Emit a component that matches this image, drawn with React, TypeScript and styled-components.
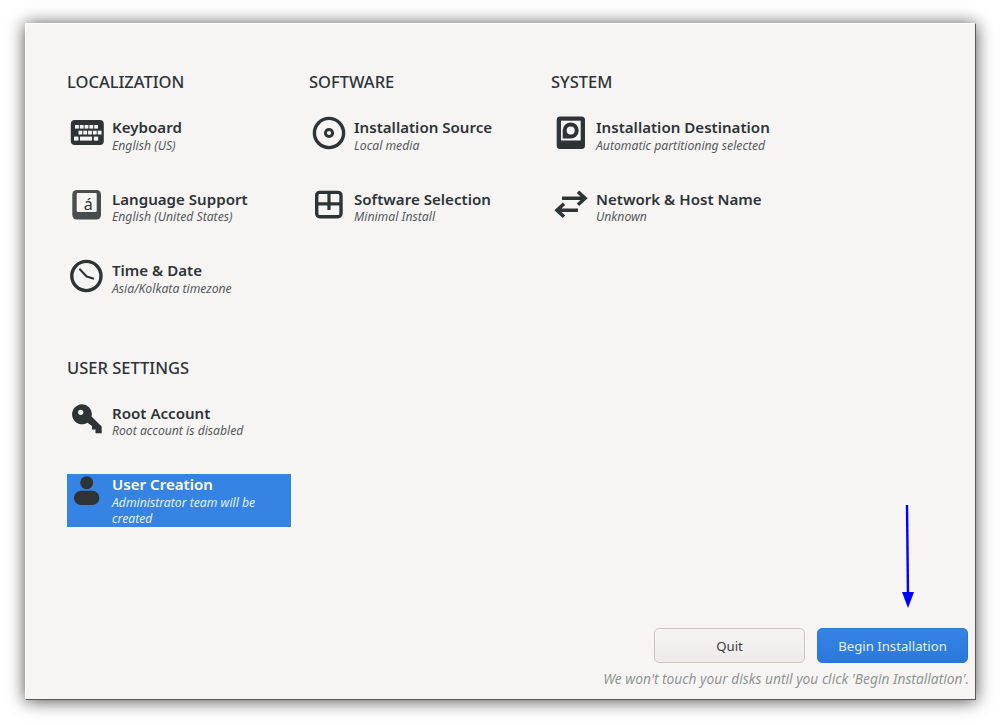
import React from 'react';
import styled, { createGlobalStyle } from 'styled-components';

const GlobalStyle = createGlobalStyle`
  html, body {
    margin: 0;
    padding: 0;
    background: #ffffff;
    font-family: "Noto Sans", "Open Sans", sans-serif;
  }
`;

const Page = styled.div`
  width: 1000px;
  height: 725px;
  padding: 23px 24px 25px 25px;
  box-sizing: border-box;
  overflow: hidden;
`;

const Window = styled.div`
  position: relative;
  height: 100%;
  box-sizing: border-box;
  display: flex;
  flex-direction: column;
  justify-content: space-between;
  padding: 48px 6px 11px 41px;
  background: #f6f5f4;
  border: 1px solid #5a5a5a;
  border-top-color: #ffffff;
  border-left-color: #ffffff;
  box-shadow: 0 1px 16px rgba(0, 0, 0, 0.7);
`;

const Hub = styled.div`
  display: flex;
  flex-direction: column;
  gap: 44.7px;
`;

const Row = styled.div`
  display: flex;
`;

const Section = styled.section`
  width: 242px;
`;

const SectionTitle = styled.h2`
  margin: 0 0 25px;
  height: 20px;
  font-size: 16.5px;
  line-height: 20px;
  font-weight: 500;
  color: #2e3436;
`;

const SpokeList = styled.div`
  display: flex;
  flex-direction: column;
  gap: 18.5px;
`;

const Spoke = styled.div<{ $selected?: boolean }>`
  width: 224px;
  min-height: 53px;
  box-sizing: border-box;
  display: flex;
  align-items: flex-start;
  padding-left: 3px;
  background: ${(p) => (p.$selected ? '#3584e4' : 'transparent')};
`;

const IconBox = styled.svg`
  flex: none;
  width: 34px;
  height: 34px;
  margin: -1px 8px 0 0;
`;

const SpokeText = styled.div`
  min-width: 0;
  padding-top: 1px;
`;

const SpokeTitle = styled.div<{ $selected?: boolean }>`
  font-size: 15.1px;
  line-height: 19px;
  font-weight: 600;
  white-space: nowrap;
  color: ${(p) => (p.$selected ? '#ffffff' : '#2e3436')};
`;

const SpokeStatus = styled.div<{ $selected?: boolean }>`
  padding-top: 0.5px;
  font-size: 12.2px;
  line-height: 16px;
  font-style: italic;
  color: ${(p) => (p.$selected ? '#e4eefb' : '#555a5c')};
`;

const Footer = styled.footer`
  display: flex;
  flex-direction: column;
  align-items: flex-end;
  gap: 7px;
`;

const Buttons = styled.div`
  display: flex;
  gap: 12px;
  margin-right: 1px;
`;

const Button = styled.button<{ $primary?: boolean }>`
  width: 151px;
  height: 35px;
  padding: 0;
  border-radius: 5px;
  font-family: inherit;
  font-size: 13.2px;
  color: ${(p) => (p.$primary ? '#e6effb' : '#3d3d3d')};
  border: 1px solid ${(p) => (p.$primary ? '#2a76d6' : '#cdc7c2')};
  background: ${(p) =>
    p.$primary
      ? 'linear-gradient(#3584e4, #2a78dc)'
      : 'linear-gradient(#f6f5f4, #edebe9)'};
`;

const Hint = styled.div`
  font-size: 13.75px;
  line-height: 18px;
  font-style: italic;
  color: #929595;
`;

const Arrow = styled.svg`
  position: absolute;
  left: 869px;
  top: 479px;
  width: 24px;
  height: 108px;
`;

const dark = '#2e3436';
const paper = '#f6f5f4';

const KeyboardIcon = () => (
  <IconBox viewBox="0 0 34 34">
    <rect x="0.8" y="4" width="33" height="25" rx="4" fill={dark} />
    <g fill={paper}>
      {[5, 9.8, 14.6, 19.4, 24.2].map((x) => (
        <rect key={x} x={x} y="9" width="3.8" height="3.6" />
      ))}
      {[8.5, 13.3, 18.1, 22.9, 27.7].map((x) => (
        <rect key={x} x={x} y="14.7" width="3.8" height="3.8" />
      ))}
      <rect x="4" y="20.6" width="4.4" height="4" />
      <rect x="10" y="20.6" width="12" height="4" />
      <rect x="23.8" y="20.6" width="4.4" height="4" />
    </g>
  </IconBox>
);

const LanguageIcon = () => (
  <IconBox viewBox="0 0 34 34">
    <rect x="2.3" y="2" width="28.7" height="29.5" rx="4.5" fill="#4a4d4e" />
    <rect x="6.7" y="5" width="20" height="19" rx="1" fill={paper} />
    <text x="18.3" y="22" fontSize="16" textAnchor="middle" fill={dark} fontFamily="Noto Sans">
      á
    </text>
  </IconBox>
);

const ClockIcon = () => (
  <IconBox viewBox="0 0 34 34">
    <circle cx="16.4" cy="17" r="14.6" fill="none" stroke={dark} strokeWidth="3.4" />
    <path d="M9.3 9.8 L16.7 17.5 L24 19.8" fill="none" stroke={dark} strokeWidth="2" />
  </IconBox>
);

const DiscIcon = () => (
  <IconBox viewBox="0 0 34 34">
    <circle cx="17" cy="17" r="14.6" fill="none" stroke={dark} strokeWidth="3.4" />
    <circle cx="17" cy="17" r="3.6" fill="none" stroke={dark} strokeWidth="3" />
  </IconBox>
);

const SelectionIcon = () => (
  <IconBox viewBox="0 0 34 34">
    <rect x="4.7" y="4.4" width="24.3" height="24.3" rx="3" fill="none" stroke={dark} strokeWidth="3.4" />
    <path d="M4 15.8 H29 M17 4 V22" fill="none" stroke={dark} strokeWidth="3.2" />
  </IconBox>
);

const DiskIcon = () => (
  <IconBox viewBox="0 0 34 34">
    <rect x="2.7" y="0.5" width="28.3" height="32.5" rx="3.5" fill={dark} />
    <rect x="7" y="4.7" width="19.7" height="19.8" fill={paper} />
    <path d="M8.7 14.5 A8 8 0 1 1 16.7 22.5 H8.7 Z" fill={dark} />
    <circle cx="16.7" cy="14.5" r="4" fill={paper} />
  </IconBox>
);

const NetworkIcon = () => (
  <IconBox viewBox="0 0 34 34">
    <path d="M8 10.3 H30 M24 3.8 L31 10.3 L24 16.8" fill="none" stroke={dark} strokeWidth="3.6" />
    <path d="M24 22.3 H4 M10 15.8 L3 22.3 L10 28.8" fill="none" stroke={dark} strokeWidth="3.6" />
  </IconBox>
);

const KeyIcon = () => (
  <IconBox viewBox="0 0 34 34">
    <path
      d="M12 2.3 A10 10 0 0 1 22 12.3 L21.5 14.5 L31.7 24.5 V31.3 H25.5 V27.5 H22 V24 L17.5 20.7 A10 10 0 1 1 12 2.3 Z"
      fill={dark}
    />
    <circle cx="10.7" cy="10.3" r="2.6" fill={paper} />
  </IconBox>
);

const UserIcon = () => (
  <IconBox viewBox="0 0 34 34">
    <circle cx="16.7" cy="9.7" r="6.5" fill={dark} />
    <rect x="4" y="17.7" width="25.3" height="14.3" rx="7" fill={dark} />
  </IconBox>
);

const App: React.FC = () => (
  <Page>
    <GlobalStyle />
    <Window>
      <Hub>
        <Row>
          <Section>
            <SectionTitle>LOCALIZATION</SectionTitle>
            <SpokeList>
              <Spoke>
                <KeyboardIcon />
                <SpokeText>
                  <SpokeTitle>Keyboard</SpokeTitle>
                  <SpokeStatus>English (US)</SpokeStatus>
                </SpokeText>
              </Spoke>
              <Spoke>
                <LanguageIcon />
                <SpokeText>
                  <SpokeTitle>Language Support</SpokeTitle>
                  <SpokeStatus>English (United States)</SpokeStatus>
                </SpokeText>
              </Spoke>
              <Spoke>
                <ClockIcon />
                <SpokeText>
                  <SpokeTitle>Time &amp; Date</SpokeTitle>
                  <SpokeStatus>Asia/Kolkata timezone</SpokeStatus>
                </SpokeText>
              </Spoke>
            </SpokeList>
          </Section>
          <Section>
            <SectionTitle>SOFTWARE</SectionTitle>
            <SpokeList>
              <Spoke>
                <DiscIcon />
                <SpokeText>
                  <SpokeTitle>Installation Source</SpokeTitle>
                  <SpokeStatus>Local media</SpokeStatus>
                </SpokeText>
              </Spoke>
              <Spoke>
                <SelectionIcon />
                <SpokeText>
                  <SpokeTitle>Software Selection</SpokeTitle>
                  <SpokeStatus>Minimal Install</SpokeStatus>
                </SpokeText>
              </Spoke>
            </SpokeList>
          </Section>
          <Section>
            <SectionTitle>SYSTEM</SectionTitle>
            <SpokeList>
              <Spoke>
                <DiskIcon />
                <SpokeText>
                  <SpokeTitle>Installation Destination</SpokeTitle>
                  <SpokeStatus>Automatic partitioning selected</SpokeStatus>
                </SpokeText>
              </Spoke>
              <Spoke>
                <NetworkIcon />
                <SpokeText>
                  <SpokeTitle>Network &amp; Host Name</SpokeTitle>
                  <SpokeStatus>Unknown</SpokeStatus>
                </SpokeText>
              </Spoke>
            </SpokeList>
          </Section>
        </Row>
        <Row>
          <Section>
            <SectionTitle>USER SETTINGS</SectionTitle>
            <SpokeList>
              <Spoke>
                <KeyIcon />
                <SpokeText>
                  <SpokeTitle>Root Account</SpokeTitle>
                  <SpokeStatus>Root account is disabled</SpokeStatus>
                </SpokeText>
              </Spoke>
              <Spoke $selected>
                <UserIcon />
                <SpokeText>
                  <SpokeTitle $selected>User Creation</SpokeTitle>
                  <SpokeStatus $selected>Administrator team will be created</SpokeStatus>
                </SpokeText>
              </Spoke>
            </SpokeList>
          </Section>
        </Row>
      </Hub>
      <Footer>
        <Buttons>
          <Button>Quit</Button>
          <Button $primary>Begin Installation</Button>
        </Buttons>
        <Hint>We won't touch your disks until you click 'Begin Installation'.</Hint>
      </Footer>
      <Arrow viewBox="0 0 24 108">
        <path d="M12 2 L13 92" stroke="#0000ff" strokeWidth="2.4" fill="none" />
        <path d="M7 89 H19 L13 105 Z" fill="#0000ff" />
      </Arrow>
    </Window>
  </Page>
);

export default App;
